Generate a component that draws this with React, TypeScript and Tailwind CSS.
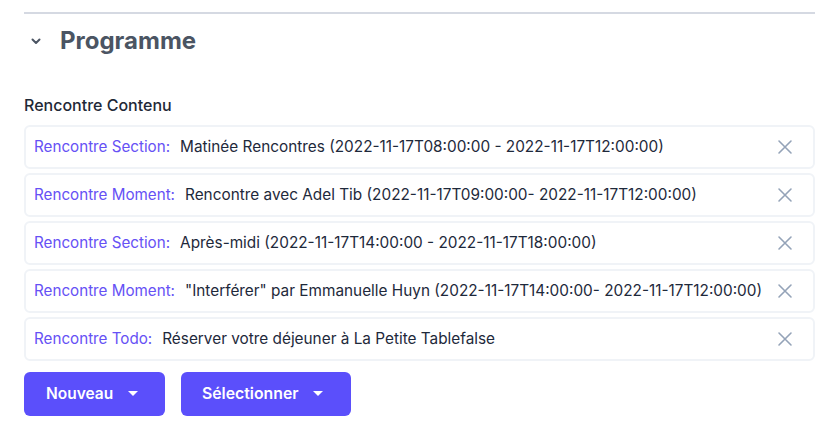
import React from "react";

const items = [
  { label: "Rencontre Section:", text: "Matinée Rencontres (2022-11-17T08:00:00 - 2022-11-17T12:00:00)" },
  { label: "Rencontre Moment:", text: "Rencontre avec Adel Tib (2022-11-17T09:00:00- 2022-11-17T12:00:00)" },
  { label: "Rencontre Section:", text: "Après-midi (2022-11-17T14:00:00 - 2022-11-17T18:00:00)" },
  { label: "Rencontre Moment:", text: "\"Interférer\" par Emmanuelle Huyn (2022-11-17T14:00:00- 2022-11-17T12:00:00)" },
  { label: "Rencontre Todo:", text: "Réserver votre déjeuner à La Petite Tablefalse" },
];

function XIcon() {
  return (
    <svg width="16" height="16" viewBox="0 0 16 16" fill="none" stroke="#94a3b8" strokeWidth="1.6" strokeLinecap="round">
      <path d="M2 2 L14 14 M14 2 L2 14" />
    </svg>
  );
}

function Caret() {
  return (
    <svg width="10" height="6" viewBox="0 0 10 6" fill="white">
      <path d="M0 0 H10 L5 5 Z" />
    </svg>
  );
}

export default function App() {
  return (
    <div className="w-[839px] h-[438px] bg-white px-6 pt-3" style={{ fontFamily: "Inter, 'Noto Sans', sans-serif" }}>
      <div className="w-[791px] border-t-2 border-[#d5d9e2]">
        <div className="flex items-center h-[54px] pl-[6px]">
          <svg width="12" height="12" viewBox="0 0 12 12" fill="none" stroke="#4b5563" strokeWidth="2" strokeLinecap="round" strokeLinejoin="round">
            <path d="M2.5 4.5 L6 8 L9.5 4.5" />
          </svg>
          <span className="ml-[18px] text-[24px] font-bold text-[#4b5563]">Programme</span>
        </div>
        <div className="mt-[27px] text-[16px] font-medium text-[#1f2937] leading-5">Rencontre Contenu</div>
        <div className="mt-[10px] flex flex-col gap-[4px]">
          {items.map((it, i) => (
            <div key={i} className="h-[44px] flex items-center border-2 border-[#f0f3f7] rounded-md pl-[8px] pr-[20px]">
              <span className="text-[#6651f5] text-[15.2px]">{it.label}</span>
              <span className="ml-[10px] text-[#1e293b] text-[15.35px]">{it.text}</span>
              <span className="ml-auto flex items-center"><XIcon /></span>
            </div>
          ))}
        </div>
        <div className="mt-[11px] flex gap-4">
          <button className="h-[44px] w-[141px] rounded-md bg-[#5b4ffb] text-white font-semibold text-[15.5px] flex items-center pl-[22px] gap-[15px]">
            Nouveau <Caret />
          </button>
          <button className="h-[44px] w-[170px] rounded-md bg-[#5b4ffb] text-white font-semibold text-[15.8px] flex items-center pl-[21px] gap-[14px]">
            Sélectionner <Caret />
          </button>
        </div>
      </div>
    </div>
  );
}
